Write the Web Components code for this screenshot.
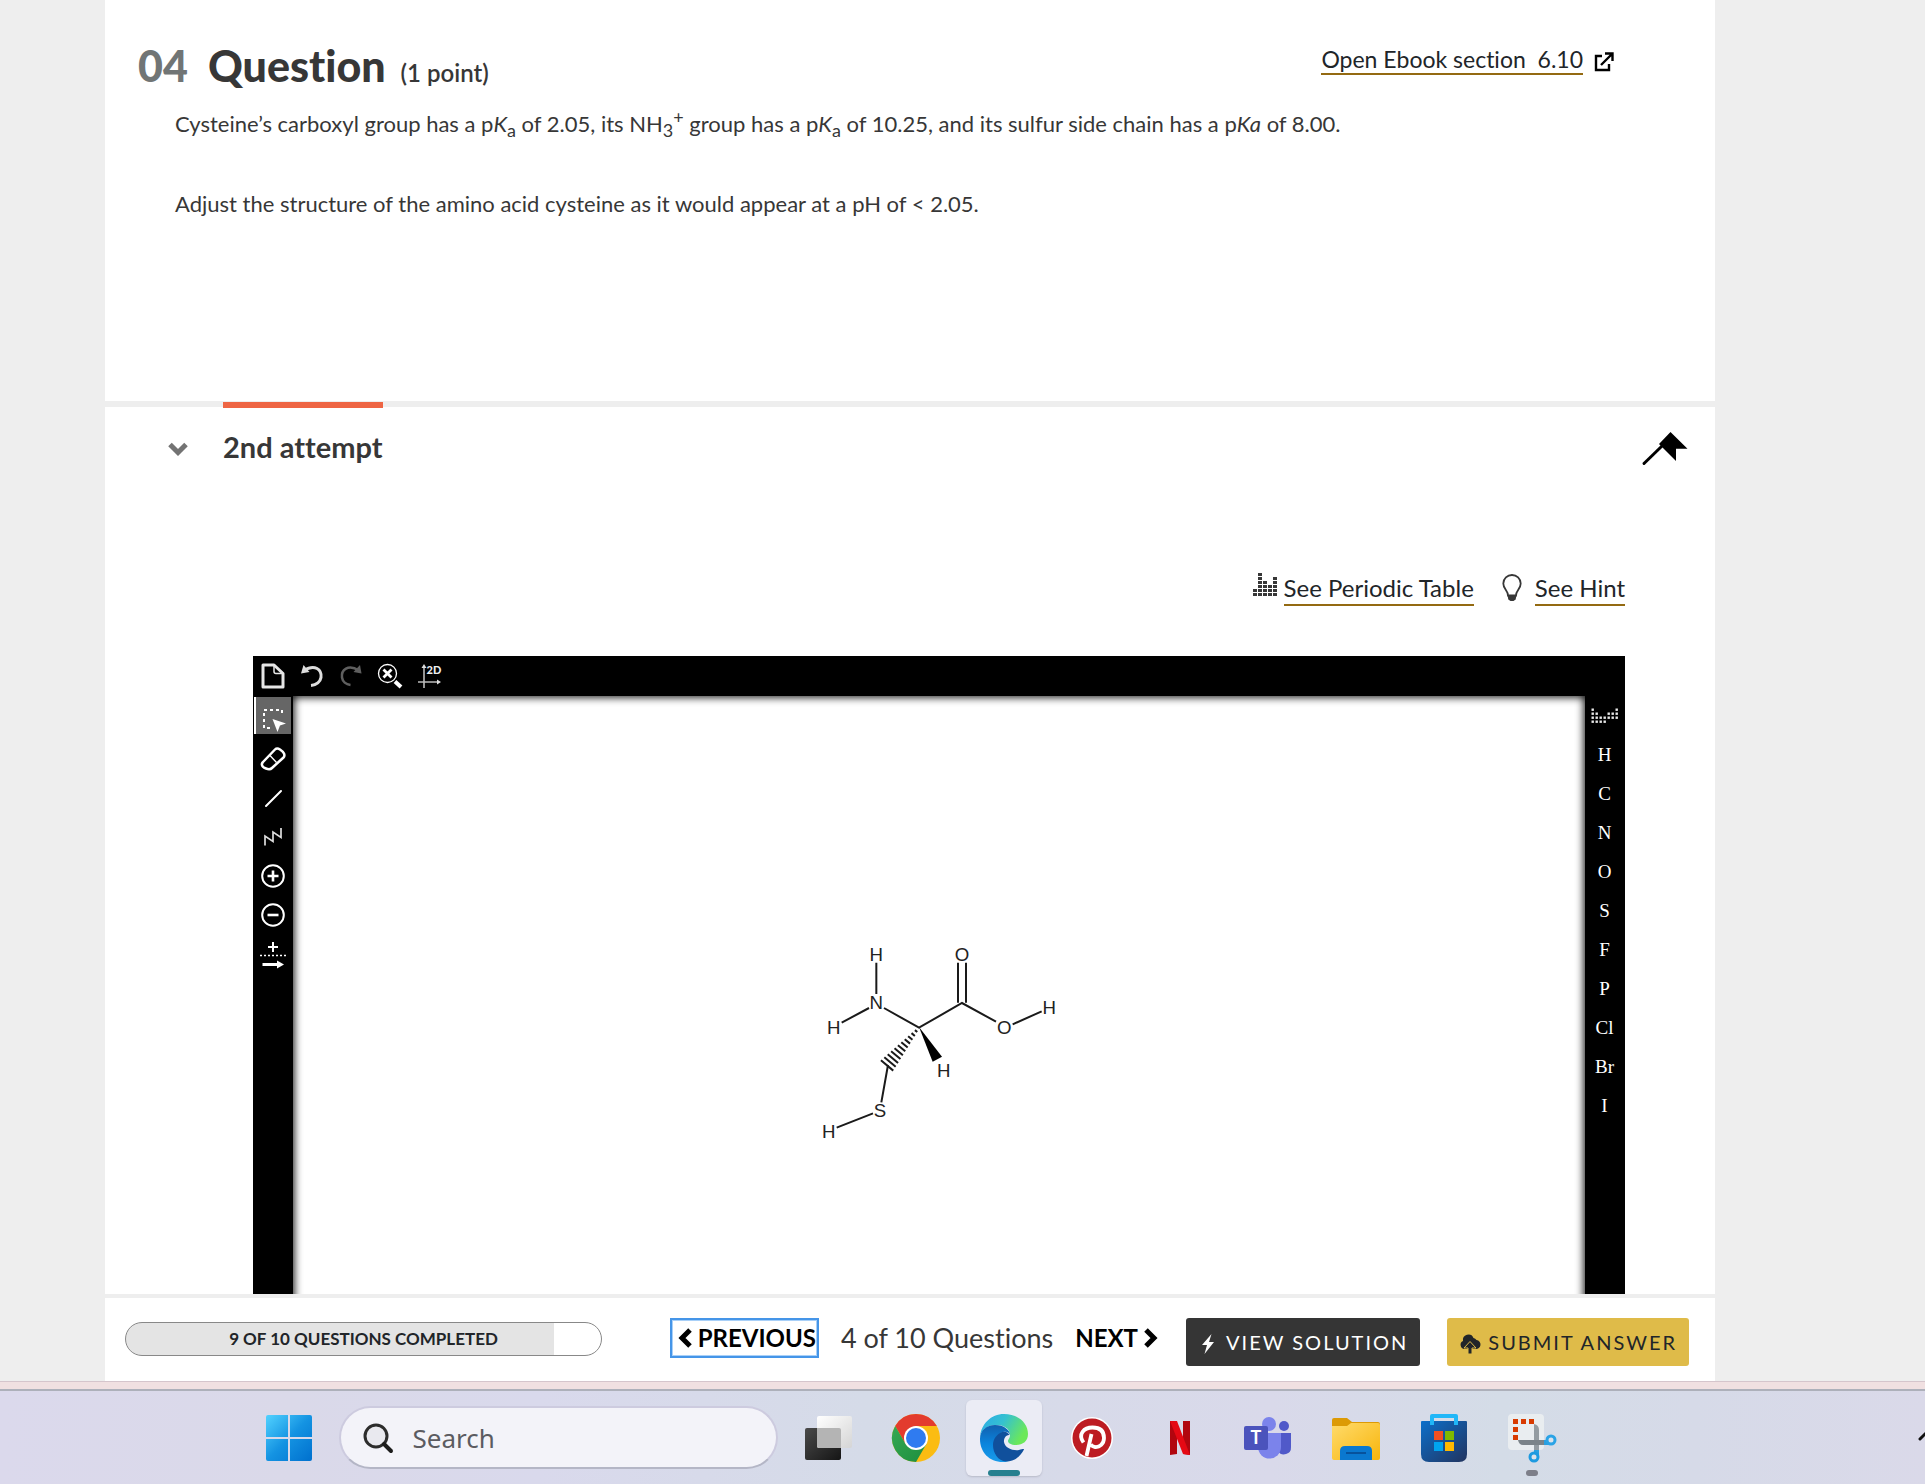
<!DOCTYPE html>
<html lang="en">
<head>
<meta charset="utf-8">
<title>Question 04</title>
<style>
    body {
        margin: 0;
        background: #eee;
        color: #373737;
        font-family: Lato, "Liberation Sans", sans-serif;
        font-size: 24px;
        line-height: 36px;
        font-variant-ligatures: none;
    }
</style>
</head>
<body>
<quiz-app></quiz-app>

<script>
const ICONS = {
    external: { box: '0 0 20 20', svg: `<path d="M8 4H2v14h13v-6" fill="none" stroke="#000" stroke-width="2.4"/><path d="M7 13 18 2M11 1.5h7.500V9" fill="none" stroke="#000" stroke-width="2.4"/>` },
    chevronDown: { box: '0 0 20 14', svg: `<path d="M2 2.500 10 10.500 18 2.500" fill="none" stroke="#737373" stroke-width="5"/>` },
    chevronLeft: { box: '0 0 14 20', svg: `<path d="M12 2 4 10l8 8" fill="none" stroke="#000" stroke-width="5"/>` },
    chevronRight: { box: '0 0 14 20', svg: `<path d="M2 2l8 8-8 8" fill="none" stroke="#000" stroke-width="5"/>` },
    pin: { box: '0 0 46 34', svg: `<path d="M2 31.500 20 14" stroke="#000" stroke-width="3" stroke-linecap="round"/><path d="M28.500 0 45.500 16.800H34V29L17 12z"/>` },
    table: { box: '0 0 26 24', svg: `<g fill="#373737">${[[0, 2], [1, 6], [2, 4], [3, 3], [4, 5]].map(([c, n]) => Array.from({ length: n }, (_, r) => `<rect x="${1 + c * 5}" y="${20 - r * 4}" width="4" height="3"/>`).join('')).join('')}</g>` },
    bulb: { box: '0 0 20 28', svg: `<path d="M6 21.500c0-5-4.700-6.500-4.700-12A8.700 8.700 0 0 1 10 1a8.700 8.700 0 0 1 8.700 8.500c0 5.500-4.700 7-4.700 12z" fill="none" stroke="#373737" stroke-width="1.800"/><path d="M5.500 21h9l-.8 4.500-2.200 1.500h-3L6.300 25.500z" fill="#373737"/>` },
    bolt: { box: '0 0 12 20', svg: `<path d="M9.500 0 0 11h5L2.500 20 12 8H7z" fill="#fff"/>` },
    cloud: { box: '0 0 20 19', svg: `<path d="M4.500 14A4.200 4.200 0 0 1 3 6 5.500 5.500 0 0 1 13.500 3a4.500 4.500 0 0 1 3 2A4.500 4.500 0 0 1 15.500 14z" fill="#212529"/><path d="M10 6.500 16 13h-4v6H8v-6H4z" fill="#212529" stroke="#dfbb49" stroke-width="1"/>` },
    doc: { box: '0 0 24 26', svg: `<path d="M2 2h11l9 8.500V24H2z" fill="none" stroke="#e6e6e6" stroke-width="3" stroke-linejoin="round"/><path d="M13 2v6.500q0 2 2 2h7" fill="none" stroke="#e6e6e6" stroke-width="1.500"/>` },
    undo: { box: '0 0 24 24', svg: `<path d="M4 6.500C15-.5 22 6 21 13.500c-.6 4-4.500 7.500-10 8" fill="none" stroke="#ddd" stroke-width="3"/><path d="M1 9.500 3.500 1 9.500 8z" fill="#ddd"/>` },
    redo: { box: '0 0 24 24', svg: `<path d="M20 6.500C9-.5 2 6 3 13.500c.6 4 4 7 8.500 7.500" fill="none" stroke="#5f5f5f" stroke-width="2.500"/><path d="M22.500 9.500 21 1 14.500 8z" fill="#5f5f5f"/>` },
    clean: { box: '0 0 26 26', svg: `<circle cx="10.500" cy="10.500" r="9" fill="none" stroke="#fff" stroke-width="1.300"/><path d="m6.500 6.500 8 8m0-8-8 8" stroke="#fff" stroke-width="2.800"/><path d="m18 18.500 6 5.500" stroke="#fff" stroke-width="4"/>` },
    axes: { box: '0 0 24 26', svg: `<path d="M7 25V4M1 19h20" stroke="#bbb" stroke-width="1.600"/><path d="M4.500 5 7 1l2.500 4zM20 16.500l4 2.500-4 2.500z" fill="#ddd"/><text x="9.500" y="11" font-family="Lato, sans-serif" font-weight="900" font-size="11" fill="#eee">2D</text>` },
    select: { box: '0 0 26 26', svg: `<path d="M3 3h18v18H3z" fill="none" stroke="#fff" stroke-width="2" stroke-dasharray="3 3"/><path d="M9 9h17v17H9z" fill="#666"/><path d="M11.500 12 25 16.500l-6 2L16.500 25z" fill="#fff"/>` },
    eraser: { box: '0 0 26 26', svg: `<path d="m3 16 12-12.500q2-2 5 0t4 4q1 2.500-.5 4L12 22q-2 2-6 .5t-4-3.500q-.5-1.500 1-3z" fill="none" stroke="#fff" stroke-width="2.500"/><path d="m10 9.500 6.500 7" stroke="#fff" stroke-width="1.300"/>` },
    bond: { box: '0 0 26 26', svg: `<path d="M6 21 21 6" stroke="#fff" stroke-width="2" stroke-linecap="round"/>` },
    chain: { box: '0 0 26 26', svg: `<path d="M5 21.500V12l8 5.500V8l8 5.500V4" fill="none" stroke="#ddd" stroke-width="1.700"/>` },
    plus: { box: '0 0 26 26', svg: `<circle cx="13" cy="13" r="10.800" fill="none" stroke="#fff" stroke-width="2"/><path d="M13 7.500v11M7.500 13h11" stroke="#fff" stroke-width="2.600"/>` },
    minus: { box: '0 0 26 26', svg: `<circle cx="13" cy="13" r="10.800" fill="none" stroke="#fff" stroke-width="2"/><path d="M7.500 13h11" stroke="#fff" stroke-width="2.600"/>` },
    reaction: { box: '0 0 26 26', svg: `<path d="M13 1v10M8 6h10" stroke="#fff" stroke-width="2"/><path d="M0 14.500h26" stroke="#fff" stroke-width="1.300" stroke-dasharray="2 2"/><path d="M2.500 23.500h16" stroke="#fff" stroke-width="3"/><path d="m17 19.500 7 4-7 4z" fill="#fff"/>` },
    periodic: { box: '0 0 28 16', svg: `<g fill="#e8e8e8">${['1000001', '1100111', '1111111', '1111000'].map((row, y) => [...row].map((c, x) => c === '1' ? `<rect x="${x * 4 + .5}" y="${y * 4 + .5}" width="2.400" height="2.400"/>` : '').join('')).join('')}</g>` },
    start: { box: '0 0 46 46', svg: `<defs><linearGradient id="a" x1="0" y1="0" x2="1" y2="1"><stop offset="0" stop-color="#52d2ff"/><stop offset=".5" stop-color="#1493e2"/><stop offset="1" stop-color="#0070ce"/></linearGradient></defs><path d="M2 0h20v22H0V2q0-2 2-2zM24 0h20q2 0 2 2v20H24zM0 24h22v22H2q-2 0-2-2zM24 24h22v20q0 2-2 2H24z" fill="url(#a)"/>` },
    search: { box: '0 0 30 30', svg: `<circle cx="13" cy="13" r="11" fill="#e9e9ef" stroke="#2c2c2c" stroke-width="3"/><path d="m21 21 7 7" stroke="#1c1c1c" stroke-width="4" stroke-linecap="round"/>` },
    taskView: { box: '0 0 48 48', svg: `<defs><linearGradient id="a" x1="0" y1="0" x2="1" y2="1"><stop stop-color="#4a4a4a"/><stop offset="1" stop-color="#151515"/></linearGradient><linearGradient id="b" x1="0" y1="0" x2="1" y2="1"><stop stop-color="#fff"/><stop offset="1" stop-color="#d5d5d5"/></linearGradient></defs><rect x="1" y="14" width="36" height="32" rx="2" fill="url(#a)"/><rect x="13" y="2" width="35" height="32" rx="2" fill="url(#b)"/><path d="M13 14h22q2 0 2 2v18H15q-2 0-2-2z" fill="#b4b4b4"/>` },
    chrome: { box: '0 0 48 48', svg: `<defs><linearGradient id="g" x1="0" y1="0" x2="1" y2="1"><stop stop-color="#34a853"/><stop offset="1" stop-color="#1e8e3e"/></linearGradient></defs><circle cx="24" cy="24" r="24" fill="#fbbc12"/><path d="M3.200 12A24 24 0 0 1 44.800 12H24L13.600 30z" fill="#e33b2e"/><path d="M3.200 12A24 24 0 0 0 24 48l10.400-18H13.600z" fill="url(#g)"/><circle cx="24" cy="24" r="12" fill="#fff"/><circle cx="24" cy="24" r="10" fill="#2f7bf0"/>` },
    edge: { box: '0 0 48 48', svg: `<defs><linearGradient id="a" x1="0" y1="0" x2="1" y2=".4"><stop stop-color="#2aa8ea"/><stop offset=".5" stop-color="#35c1d0"/><stop offset="1" stop-color="#6be85a"/></linearGradient><linearGradient id="b" x1="0" y1="0" x2="0" y2="1"><stop stop-color="#125fae"/><stop offset=".5" stop-color="#0a84dc"/><stop offset="1" stop-color="#1a9bea"/></linearGradient></defs><path d="M0 23C1 10 11 0 24 0c14 0 24 9 24 20 0 7-5 11-12 11-5 0-8-2-8-4 0-1.500 2-2.500 2-6C30 14 23 11 16 11 7 11 1 16 0 23z" fill="url(#a)"/><path d="M0 25C0 16 7 11 15 11c9 0 15 5 15 10-1-3-4-4-7-3-5 2-7 9-5 15 2 7 7 12 13 13-3 1.500-5 2-8 2C9 48 0 38 0 25z" fill="url(#b)"/><path d="M13 31c0-6 4-11 9-13 3-1 6 0 7.500 3-3-.5-6 3-5.500 7 .8 6 9 9 15 8 3-.7 5-1.500 5-.5-4 8-11 12-18 12C18 47 13 39 13 31z" fill="#10509c"/>` },
    pinterest: { box: '0 0 48 48', svg: `<circle cx="24" cy="24" r="21" fill="#fff"/><circle cx="24" cy="24" r="19.500" fill="#bd1c22"/><path d="M15.500 28.500C9.500 20 16 13.500 24.500 13.500S36 18 36 24s-4.500 9.500-9 9c-2.500-.3-3.500-1.500-4-3M23.500 20 18.500 42" fill="none" stroke="#fff" stroke-width="3.800"/>` },
    netflix: { box: '0 0 48 48', svg: `<path d="M14 7h7v33l-7 1z" fill="#b1060f"/><path d="M27 7h7v34l-7-1z" fill="#b1060f"/><path d="M14 7h7l13 34-7-1z" fill="#e50914"/>` },
    teams: { box: '0 0 48 48', svg: `<circle cx="40" cy="12" r="5" fill="#5059c9"/><circle cx="25" cy="10" r="7" fill="#7b83eb"/><path d="M33 19h14v14a7 7 0 0 1-13 4z" fill="#5059c9"/><path d="M14 19h23v14a11.500 11.500 0 0 1-23 0z" fill="#7b83eb"/><rect x="0" y="12" width="24" height="24" rx="2" fill="#4b53bc"/><text x="12" y="30" text-anchor="middle" font-family="Lato, sans-serif" font-weight="700" font-size="18" fill="#fff">T</text>` },
    folder: { box: '0 0 48 48', svg: `<defs><linearGradient id="a" x1="0" y1="0" x2="1" y2="1"><stop stop-color="#ffdb6b"/><stop offset="1" stop-color="#f8b50c"/></linearGradient></defs><path d="M0 6q0-2 2-2h13l5 4H46q2 0 2 2v6H0z" fill="#dc9a05"/><path d="M0 12h15l4-3h27q2 0 2 2v33q0 2-2 2H2q-2 0-2-2z" fill="url(#a)"/><path d="M8 46V37q0-5 5-5h22q5 0 5 5v9z" fill="#0a78cf"/><path d="M14 39h20" stroke="#07529c" stroke-width="2"/>` },
    store: { box: '0 0 48 48', svg: `<defs><linearGradient id="a" x1="0" y1="0" x2="1" y2="1"><stop stop-color="#0c6fca"/><stop offset="1" stop-color="#22345f"/></linearGradient></defs><path d="M1 8q0-1 1-1h44q1 0 1 1v32q0 8-8 8H9q-8 0-8-8z" fill="url(#a)"/><path d="M12 11V2h24v9" fill="none" stroke="#20b7f8" stroke-width="4" stroke-linejoin="round"/><path d="M14 17h9v9h-9z" fill="#f25022"/><path d="M25 17h9v9h-9z" fill="#7fba00"/><path d="M14 28h9v9h-9z" fill="#00a4ef"/><path d="M25 28h9v9h-9z" fill="#ffb900"/>` },
    snip: { box: '0 0 48 48', svg: `<rect x="0" y="0" width="36" height="36" rx="4" fill="#e9edf0"/><path d="M5 5h5v5H5zM13 5h5v5h-5zM21 5h5v5h-5zM5 13h5v5H5zM5 21h5v5H5z" fill="#d83b01"/><path d="M26 10q5 1 5 6v22h-5z" fill="#949ca2"/><path d="M10 26h28v5H15q-4 0-5-5z" fill="#7b8389"/><path d="M36 26h5v5h-5zM26 36h5v8h-5z" fill="#2a9fe0"/><circle cx="43" cy="26" r="4" fill="#dce2ea" stroke="#2aa3e6" stroke-width="3"/><circle cx="26" cy="43" r="4" fill="#dce2ea" stroke="#1d9ae0" stroke-width="3"/>` },
    trayUp: { box: '0 0 24 14', svg: `<path d="M2 12 12 2l10 10" fill="none" stroke="#111" stroke-width="3" stroke-linecap="round"/>` }
};

class AppIcon extends HTMLElement {
    connectedCallback() {
        const icon = ICONS[this.getAttribute('name')];
        const [, , w, h] = icon.box.split(' ');
        this.attachShadow({ mode: 'open' }).innerHTML = `
            <style>
                :host { display: inline-flex; flex: none; }
                svg { display: block; overflow: visible; }
            </style>
            <svg width="${w}" height="${h}" viewBox="${icon.box}" aria-hidden="true">${icon.svg}</svg>
        `;
    }
}

class TextLink extends HTMLElement {
    connectedCallback() {
        this.attachShadow({ mode: 'open' }).innerHTML = `
            <style>
                :host { display: inline-flex; white-space: pre; }
                a {
                    color: #212529;
                    text-decoration: none;
                    line-height: var(--link-height, 32px);
                    border-bottom: 2px solid #946a12;
                }
            </style>
            <a href="#"><slot></slot></a>
        `;
    }
}

class QuestionHeader extends HTMLElement {
    connectedCallback() {
        this.attachShadow({ mode: 'open' }).innerHTML = `
            <style>
                :host { display: block; height: 401px; padding: 38px 101px 0 33px; background: #fff; }
                header { display: flex; justify-content: space-between; align-items: flex-start; }
                h1 { display: flex; align-items: baseline; margin: 0; font-size: 43px; line-height: 56px; font-weight: 900; }
                .number { color: #717575; margin-right: 20px; }
                .points { font-size: 24px; font-weight: 600; margin-left: 15px; }
                .ebook { --link-height: 28px; display: flex; gap: 11px; align-items: center; padding-top: 7px; font-size: 23px; }
                .ebook app-icon { margin-top: 4px; }
                .prompt { padding: 5px 0 0 37px; font-size: 22px; }
                p { margin: 0 0 44px; white-space: nowrap; }
                sub, sup { font-size: 18px; line-height: 0; }
            </style>
            <header>
                <h1><span class="number">04</span>Question<span class="points">(1 point)</span></h1>
                <div class="ebook"><text-link>Open Ebook section  6.10</text-link><app-icon name="external"></app-icon></div>
            </header>
            <div class="prompt">
                <p>Cysteine’s carboxyl group has a p<i>K</i><sub>a</sub> of 2.05, its NH<sub>3</sub><sup>+</sup> group has a p<i>K</i><sub>a</sub> of 10.25, and its sulfur side chain has a p<i>Ka</i> of 8.00.</p>
                <p>Adjust the structure of the amino acid cysteine as it would appear at a pH of &lt; 2.05.</p>
            </div>
        `;
    }
}

class AttemptPanel extends HTMLElement {
    connectedCallback() {
        this.attachShadow({ mode: 'open' }).innerHTML = `
            <style>
                :host { display: flex; flex-direction: column; min-height: 0; margin-top: 6px; background: #fff; }
                header { display: flex; align-items: flex-start; padding: 0 27px 0 63px; height: 82px; }
                header button { height: 84px; align-items: center; padding: 0; border: 0; background: none; display: flex; }
                h2 {
                    position: relative;
                    margin: 0 auto 0 35px;
                    font-size: 29px;
                    line-height: 80px;
                    font-weight: 700;
                }
                h2::before {
                    content: "";
                    position: absolute;
                    inset: -5px 0 auto 0;
                    height: 6px;
                    background: #ee6544;
                }
                nav { display: flex; justify-content: flex-end; align-items: center; gap: 6px; padding: 83px 90px 50px 0; }
                app-icon[name=table] { margin-bottom: 8px; }
                app-icon[name=bulb] { margin: 0 7px 2px 22px; }
                molecule-editor { flex: 1; min-height: 0; margin: 0 90px 0 148px; }
            </style>
            <header>
                <button aria-label="Collapse"><app-icon name="chevronDown"></app-icon></button>
                <h2>2nd attempt</h2>
                <button aria-label="Pin"><app-icon name="pin"></app-icon></button>
            </header>
            <nav>
                <app-icon name="table"></app-icon><text-link>See Periodic Table</text-link>
                <app-icon name="bulb"></app-icon><text-link>See Hint</text-link>
            </nav>
            <molecule-editor></molecule-editor>
        `;
    }
}

class MoleculeEditor extends HTMLElement {
    connectedCallback() {
        const button = name => `<button aria-label="${name}"><app-icon name="${name}"></app-icon></button>`;
        const elements = ['H', 'C', 'N', 'O', 'S', 'F', 'P', 'Cl', 'Br', 'I'];
        this.attachShadow({ mode: 'open' }).innerHTML = `
            <style>
                :host {
                    display: grid;
                    grid-template: 40px 1fr / 40px 1fr 40px;
                    background: #000;
                    overflow: hidden;
                }
                .top { grid-column: 1 / 4; display: flex; padding-left: 1px; gap: 1px; }
                .side { display: flex; flex-direction: column; gap: 2px; padding: 1px 2px 0 1px; }
                button {
                    display: flex;
                    align-items: center;
                    justify-content: center;
                    width: 38px;
                    height: 37px;
                    flex: none;
                    padding: 0;
                    border: 0;
                    background: none;
                    color: #fff;
                    font: 19px/37px "Liberation Serif", serif;
                }
                .top button { height: 40px; }
                .side button { width: 37px; }
                .tools button { padding-top: 8px; }
                button.active { background: #666; border-left: 2px solid #fff; }
                /* runs past the bottom so only three edges show the shadow */
                .canvas { background: #fff; box-shadow: inset 0 0 8px 1px #000; padding-top: 234px; margin-bottom: -20px; }
            </style>
            <div class="top">${['doc', 'undo', 'redo', 'clean', 'axes'].map(button).join('')}</div>
            <div class="side tools">${['select', 'eraser', 'bond', 'chain', 'plus', 'minus', 'reaction'].map(button).join('').replace('<button', '<button class="active"')}</div>
            <div class="canvas"><cysteine-drawing></cysteine-drawing></div>
            <div class="side">${button('periodic')}${elements.map(e => `<button>${e}</button>`).join('')}</div>
        `;
    }
}

class CysteineDrawing extends HTMLElement {
    connectedCallback() {
        const atoms = [['H', 229, 93], ['N', 229, 237], ['H', 101, 313], ['O', 486, 93], ['O', 613, 313], ['H', 748, 253], ['H', 431, 440], ['S', 240, 561], ['H', 86, 625]];
        // hashed wedge, widening away from the stereocentre
        let hashes = '';
        for (let i = 1; i <= 11; i++) {
            const x = 357 - i * 8.7, y = 293 + i * 10.3, w = 2 + i * 1.5;
            hashes += `M${x - w} ${y - w * .84}L${x + w} ${y + w * .84}`;
        }
        this.attachShadow({ mode: 'open' }).innerHTML = `
            <style>
                :host { display: block; padding-left: 2px; }
                svg { display: block; margin: 0 auto; }
                text { font: 56px "Liberation Sans", Arial, sans-serif; fill: #222; text-anchor: middle; }
            </style>
            <svg width="280" height="220" viewBox="0 0 840 660">
                <g fill="none" stroke="#1a1a1a" stroke-width="6">
                    <path d="M229 98v94M207 234l-82 44M252 234l105 59 129-74 102 56M474 98v120M498 98v120M638 283l87-39M264 405l-20 112M219 550l-109 43"/>
                    <path d="${hashes}"/>
                </g>
                <path d="M357 291 426 380 398 395z"/>
                ${atoms.map(([t, x, y]) => `<text x="${x}" y="${y}">${t}</text>`).join('')}
            </svg>
        `;
    }
}

class QuizFooter extends HTMLElement {
    connectedCallback() {
        this.attachShadow({ mode: 'open' }).innerHTML = `
            <style>
                :host { display: flex; align-items: flex-start; height: 83px; margin-top: 4px; padding: 20px 26px 0 20px; background: #fff; }
                .progress {
                    width: 477px;
                    height: 34px;
                    margin: 4px auto 0 0;
                    border: 1px solid #888;
                    border-radius: 17px;
                    background: linear-gradient(90deg, #e4e4e4 90%, #fff 90%);
                    color: #212529;
                    text-align: center;
                    font-size: 17px;
                    line-height: 32px;
                    font-weight: 700;
                }
                .pager { display: flex; align-items: center; gap: 22px; height: 40px; font-size: 27px; }
                button { display: flex; align-items: center; border: 0; font: inherit; white-space: nowrap; }
                .step { height: 40px; gap: 6px; padding: 0; background: none; color: #000; font-size: 24px; font-weight: 700; }
                .focused { border: 2px solid #4595e8; box-shadow: inset 0 0 0 1px #a9d0f8; padding: 0 1px 0 6px; }
                .actions { display: flex; gap: 27px; margin-left: 28px; }
                .action { height: 48px; border-radius: 3px; font-size: 20px; letter-spacing: 2px; }
                .action app-icon { margin-top: 4px; }
                .dark { gap: 12px; padding: 0 12px 0 16px; background: #353535; color: #fff; }
                .gold { gap: 8px; padding: 0 12px 0 13px; background: #dfbb49; color: #212529; }
            </style>
            <div class="progress">9 OF 10 QUESTIONS COMPLETED</div>
            <div class="pager">
                <button class="step focused"><app-icon name="chevronLeft"></app-icon>PREVIOUS</button>
                <span>4 of 10 Questions</span>
                <button class="step">NEXT<app-icon name="chevronRight"></app-icon></button>
            </div>
            <div class="actions">
                <button class="action dark"><app-icon name="bolt"></app-icon>VIEW SOLUTION</button>
                <button class="action gold"><app-icon name="cloud"></app-icon>SUBMIT ANSWER</button>
            </div>
        `;
    }
}

class TaskBar extends HTMLElement {
    connectedCallback() {
        const apps = ['taskView', 'chrome', 'edge', 'pinterest', 'netflix', 'teams', 'folder', 'store', 'snip'];
        const state = { edge: 'current', snip: 'open' };
        this.attachShadow({ mode: 'open' }).innerHTML = `
            <style>
                :host {
                    position: relative;
                    display: flex;
                    justify-content: center;
                    gap: 12px;
                    height: 103px;
                    padding: 18px 105px 0 0;
                    overflow: hidden;
                    background: linear-gradient(90deg, #dbd9ec, #dad9e9 15%, #d9d9ec 28%, #d5dbe8 45%, #d9d9ea 66%, #d4dce7 78%, #d6dae8 88%, #dad9e9);
                    border-top: 1px solid #d5c5cc;
                }
                :host::before {
                    content: "";
                    position: absolute;
                    inset: 0 0 auto 0;
                    height: 9px;
                    background: #f0e0e1;
                    border-bottom: 2px solid #adb0ba;
                }
                button {
                    position: relative;
                    display: flex;
                    align-items: center;
                    justify-content: center;
                    width: 76px;
                    height: 76px;
                    padding: 0;
                    border: 0;
                    border-radius: 6px;
                    background: none;
                }
                .current { background: #ebecf5; box-shadow: 0 1px 2px #b8bac8; }
                .current::after, .open::after {
                    content: "";
                    position: absolute;
                    bottom: 0;
                    width: 32px;
                    height: 6px;
                    border-radius: 3px;
                    background: #26808f;
                }
                .open::after { width: 12px; background: #7d7f89; }
                label {
                    display: flex;
                    align-items: center;
                    gap: 20px;
                    width: 439px;
                    height: 63px;
                    margin: 6px 0 0;
                    padding-left: 22px;
                    border: 2px solid #cdcbdf;
                    border-bottom-color: #b4b6c6;
                    border-radius: 32px;
                    background: #f3f3f9;
                }
                input {
                    width: 300px;
                    padding: 0;
                    border: 0;
                    background: none;
                    color: #5b5b61;
                    font: 26px "Noto Sans", sans-serif;
                }
                input::placeholder { color: #5b5b61; opacity: 1; }
                .tray { position: absolute; right: -17px; top: 14px; width: 24px; }
            </style>
            <button aria-label="Start"><app-icon name="start"></app-icon></button>
            <label><app-icon name="search"></app-icon><input aria-label="Search" placeholder="Search"></label>
            ${apps.map(a => `<button class="${state[a] || ''}" aria-label="${a}"><app-icon name="${a}"></app-icon></button>`).join('')}
            <button class="tray" aria-label="Hidden icons"><app-icon name="trayUp"></app-icon></button>
        `;
    }
}

class QuizApp extends HTMLElement {
    connectedCallback() {
        this.attachShadow({ mode: 'open' }).innerHTML = `
            <style>
                :host { display: flex; flex-direction: column; height: 100vh; }
                main { flex: 1; min-height: 0; display: flex; flex-direction: column; margin: 0 210px 0 105px; }
                attempt-panel { flex: 1; }
            </style>
            <main>
                <question-header></question-header>
                <attempt-panel></attempt-panel>
                <quiz-footer></quiz-footer>
            </main>
            <task-bar></task-bar>
        `;
        // box-sizing does not cross shadow boundaries
        const sheet = new CSSStyleSheet();
        sheet.replaceSync('*, :host, ::before, ::after { box-sizing: border-box; }');
        const apply = root => {
            root.adoptedStyleSheets = [sheet];
            root.querySelectorAll('*').forEach(el => el.shadowRoot && apply(el.shadowRoot));
        };
        apply(this.shadowRoot);
    }
}

customElements.define('app-icon', AppIcon);
customElements.define('text-link', TextLink);
customElements.define('cysteine-drawing', CysteineDrawing);
customElements.define('molecule-editor', MoleculeEditor);
customElements.define('question-header', QuestionHeader);
customElements.define('attempt-panel', AttemptPanel);
customElements.define('quiz-footer', QuizFooter);
customElements.define('task-bar', TaskBar);
customElements.define('quiz-app', QuizApp);
</script>
</body>
</html>
